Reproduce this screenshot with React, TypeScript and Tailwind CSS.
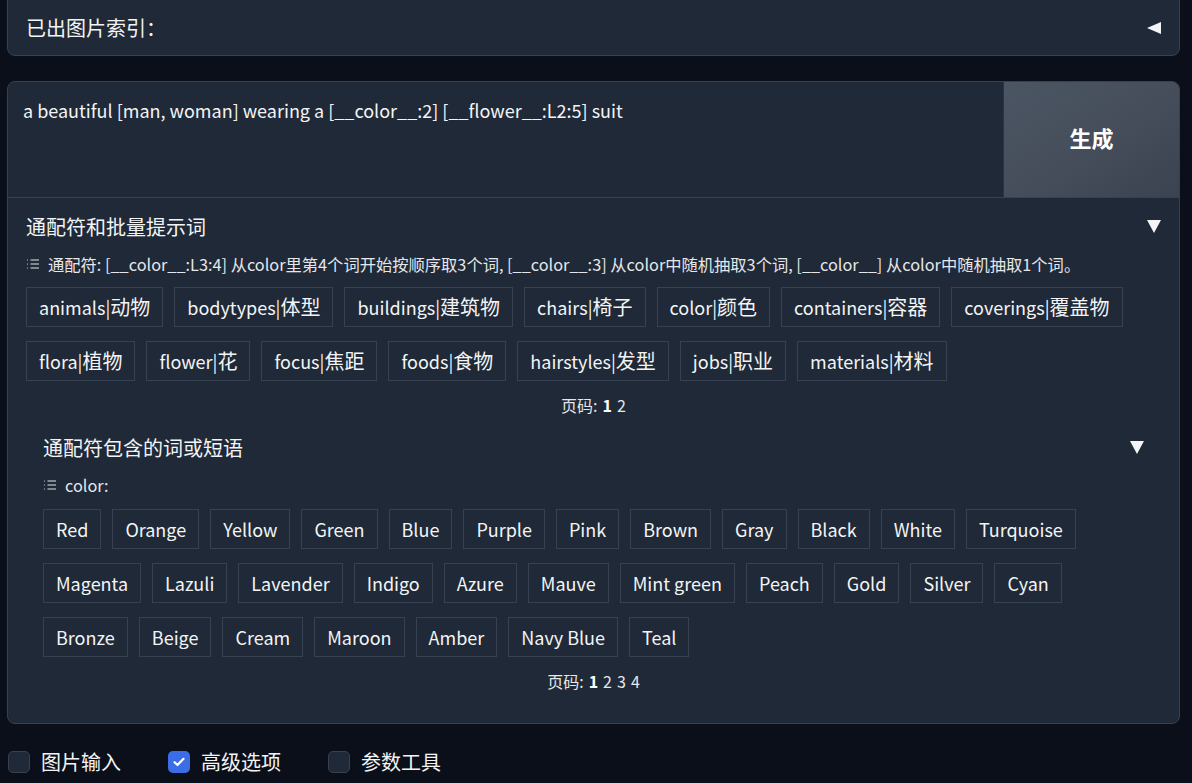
const wildcards = [
  'animals|动物',
  'bodytypes|体型',
  'buildings|建筑物',
  'chairs|椅子',
  'color|颜色',
  'containers|容器',
  'coverings|覆盖物',
  'flora|植物',
  'flower|花',
  'focus|焦距',
  'foods|食物',
  'hairstyles|发型',
  'jobs|职业',
  'materials|材料',
]

const colors = [
  'Red', 'Orange', 'Yellow', 'Green', 'Blue', 'Purple', 'Pink', 'Brown', 'Gray', 'Black', 'White', 'Turquoise',
  'Magenta', 'Lazuli', 'Lavender', 'Indigo', 'Azure', 'Mauve', 'Mint green', 'Peach', 'Gold', 'Silver', 'Cyan',
  'Bronze', 'Beige', 'Cream', 'Maroon', 'Amber', 'Navy Blue', 'Teal',
]

function Tag({ label }: { label: string }) {
  const [en, zh] = label.split('|')
  return (
    <div className="h-[40px] flex items-center px-3 border border-[#374151] bg-[#1f2937] text-[18px] text-gray-100 whitespace-nowrap">
      <span>
        {en}
        {zh !== undefined && (
          <>
            |<span className="text-[20px]">{zh}</span>
          </>
        )}
      </span>
    </div>
  )
}

function ListIcon() {
  return (
    <svg width="14" height="12" viewBox="0 0 14 12" fill="none" stroke="#d1d5db" strokeWidth="1.1" className="shrink-0">
      <circle cx="1.5" cy="2" r="0.6" fill="#d1d5db" stroke="none" />
      <circle cx="1.5" cy="6" r="0.6" fill="#d1d5db" stroke="none" />
      <circle cx="1.5" cy="10" r="0.6" fill="#d1d5db" stroke="none" />
      <line x1="4.5" y1="2" x2="13" y2="2" />
      <line x1="4.5" y1="6" x2="13" y2="6" />
      <line x1="4.5" y1="10" x2="13" y2="10" />
    </svg>
  )
}

function DownTriangle() {
  return (
    <svg width="14" height="13" viewBox="0 0 14 13">
      <polygon points="0,0 14,0 7,13" fill="#f3f4f6" />
    </svg>
  )
}

function Pager({ pages }: { pages: number }) {
  return (
    <div className="mt-[13px] h-[22px] flex items-center justify-center text-[16px] text-gray-200">
      <span>页码:</span>
      {Array.from({ length: pages }).map((_, i) => (
        <span key={i} className={i === 0 ? 'ml-[5px] font-bold text-white' : 'ml-[5px]'}>
          {i + 1}
        </span>
      ))}
    </div>
  )
}

function Checkbox({ label, checked = false }: { label: string; checked?: boolean }) {
  return (
    <div className="flex items-center gap-[11px]">
      {checked ? (
        <div className="w-[22px] h-[22px] rounded-[5px] bg-[#3b6ee6] flex items-center justify-center">
          <svg width="12" height="10" viewBox="0 0 12 10" fill="none" stroke="white" strokeWidth="2.2" strokeLinecap="round" strokeLinejoin="round">
            <polyline points="1.5,5.2 4.5,8 10.5,1.8" />
          </svg>
        </div>
      ) : (
        <div className="w-[22px] h-[22px] rounded-[5px] bg-[#1f2937] border border-[#374151]"></div>
      )}
      <span className="text-[20px] text-gray-100">{label}</span>
    </div>
  )
}

export default function App() {
  return (
    <div className="min-h-screen bg-[#0b0f19] pl-[7px] pr-[12px] overflow-hidden font-['Noto_Sans_CJK_SC','Noto_Sans',sans-serif] text-gray-100">
      {/* image index panel */}
      <div className="-mt-[12px] h-[68px] flex items-end rounded-lg border border-[#374151] bg-[#1f2937]">
        <div className="h-[55px] w-full flex items-center justify-between pl-[18px] pr-[18px]">
          <span className="text-[20px]">已出图片索引：</span>
          <svg width="14" height="12" viewBox="0 0 14 12">
            <polygon points="14,0 14,12 0,6" fill="#f3f4f6" />
          </svg>
        </div>
      </div>

      {/* main panel */}
      <div className="mt-[25px] rounded-lg border border-[#374151] bg-[#1f2937] overflow-hidden">
        <div className="h-[116px] flex border-b border-[#374151]">
          <div className="flex-1 pt-[14px] pl-[15px] text-[18px] leading-[28px]">
            a beautiful [man, woman] wearing a [__color__:2] [__flower__:L2:5] suit
          </div>
          <div className="w-[176px] pb-[4px] border-l border-[#2b3442] bg-gradient-to-br from-[#4b5563] via-[#464e5b] to-[#3b4250] flex items-center justify-center">
            <span className="text-[22px] font-bold text-white">生成</span>
          </div>
        </div>

        <div className="px-[18px] pt-[15px] pb-[31px]">
          <div className="h-[27px] flex items-center justify-between">
            <span className="text-[20px]">通配符和批量提示词</span>
            <DownTriangle />
          </div>
          <div className="mt-[13px] h-[22px] flex items-center gap-[8px] text-[16.3px] text-gray-200">
            <ListIcon />
            <span>通配符: [__color__:L3:4] 从color里第4个词开始按顺序取3个词, [__color__:3] 从color中随机抽取3个词, [__color__] 从color中随机抽取1个词。</span>
          </div>
          <div className="mt-[12px] flex flex-wrap gap-x-[11px] gap-y-[14px]">
            {wildcards.map((w) => (
              <Tag key={w} label={w} />
            ))}
          </div>
          <Pager pages={2} />

          <div className="mt-[18px] pl-[17px] pr-[17px]">
            <div className="h-[27px] flex items-center justify-between">
              <span className="text-[20px]">通配符包含的词或短语</span>
              <DownTriangle />
            </div>
            <div className="mt-[13px] h-[22px] flex items-center gap-[8px] text-[16.3px] text-gray-200">
              <ListIcon />
              <span>color:</span>
            </div>
            <div className="mt-[13px] flex flex-wrap gap-x-[11px] gap-y-[14px]">
              {colors.map((c) => (
                <Tag key={c} label={c} />
              ))}
            </div>
            <Pager pages={4} />
          </div>
        </div>
      </div>

      {/* option toggles */}
      <div className="mt-[23px] pl-[1px] flex items-center gap-[47px]">
        <Checkbox label="图片输入" />
        <Checkbox label="高级选项" checked />
        <Checkbox label="参数工具" />
      </div>
    </div>
  )
}
